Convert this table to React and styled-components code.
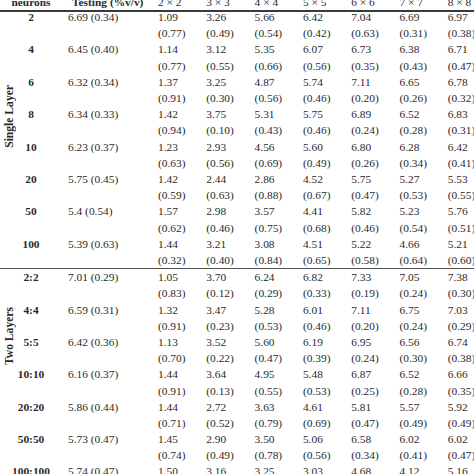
import styled, { createGlobalStyle } from "styled-components";

const GlobalStyle = createGlobalStyle`
    html, body {
        margin: 0;
        padding: 0;
        background: #ffffff;
        overflow: hidden;
    }
`

const sizes = ['2 × 2', '3 × 3', '4 × 4', '5 × 5', '6 × 6', '7 × 7', '8 × 8']

const single = [
    ['2', '6.69 (0.34)', [['1.09', '0.77'], ['3.26', '0.49'], ['5.66', '0.54'], ['6.42', '0.42'], ['7.04', '0.63'], ['6.69', '0.31'], ['6.97', '0.38']]],
    ['4', '6.45 (0.40)', [['1.14', '0.77'], ['3.12', '0.55'], ['5.35', '0.66'], ['6.07', '0.56'], ['6.73', '0.35'], ['6.38', '0.43'], ['6.71', '0.47']]],
    ['6', '6.32 (0.34)', [['1.37', '0.91'], ['3.25', '0.30'], ['4.87', '0.56'], ['5.74', '0.46'], ['7.11', '0.20'], ['6.65', '0.26'], ['6.78', '0.32']]],
    ['8', '6.34 (0.33)', [['1.42', '0.94'], ['3.75', '0.10'], ['5.31', '0.43'], ['5.75', '0.46'], ['6.89', '0.24'], ['6.52', '0.28'], ['6.83', '0.31']]],
    ['10', '6.23 (0.37)', [['1.23', '0.63'], ['2.93', '0.56'], ['4.56', '0.69'], ['5.60', '0.49'], ['6.80', '0.26'], ['6.28', '0.34'], ['6.42', '0.41']]],
    ['20', '5.75 (0.45)', [['1.42', '0.59'], ['2.44', '0.63'], ['2.86', '0.88'], ['4.52', '0.67'], ['5.75', '0.47'], ['5.27', '0.53'], ['5.53', '0.55']]],
    ['50', '5.4 (0.54)', [['1.57', '0.62'], ['2.98', '0.46'], ['3.57', '0.75'], ['4.41', '0.68'], ['5.82', '0.46'], ['5.23', '0.54'], ['5.76', '0.51']]],
    ['100', '5.39 (0.63)', [['1.44', '0.32'], ['3.21', '0.40'], ['3.08', '0.84'], ['4.51', '0.65'], ['5.22', '0.58'], ['4.66', '0.64'], ['5.21', '0.60']]],
]

const two = [
    ['2:2', '7.01 (0.29)', [['1.05', '0.83'], ['3.70', '0.12'], ['6.24', '0.29'], ['6.82', '0.33'], ['7.33', '0.19'], ['7.05', '0.24'], ['7.38', '0.30']]],
    ['4:4', '6.59 (0.31)', [['1.32', '0.91'], ['3.47', '0.23'], ['5.28', '0.53'], ['6.01', '0.46'], ['7.11', '0.20'], ['6.75', '0.24'], ['7.03', '0.29']]],
    ['5:5', '6.42 (0.36)', [['1.13', '0.70'], ['3.52', '0.22'], ['5.60', '0.47'], ['6.19', '0.39'], ['6.95', '0.24'], ['6.56', '0.30'], ['6.74', '0.38']]],
    ['10:10', '6.16 (0.37)', [['1.44', '0.91'], ['3.64', '0.13'], ['4.95', '0.55'], ['5.48', '0.53'], ['6.87', '0.25'], ['6.52', '0.28'], ['6.66', '0.35']]],
    ['20:20', '5.86 (0.44)', [['1.44', '0.71'], ['2.72', '0.52'], ['3.63', '0.79'], ['4.61', '0.69'], ['5.81', '0.47'], ['5.57', '0.49'], ['5.92', '0.49']]],
    ['50:50', '5.73 (0.47)', [['1.45', '0.74'], ['2.90', '0.49'], ['3.50', '0.78'], ['5.06', '0.56'], ['6.58', '0.34'], ['6.02', '0.41'], ['6.02', '0.47']]],
    ['100:100', '5.74 (0.47)', [['1.50', '0.81'], ['3.16', '0.45'], ['3.25', '0.80'], ['3.03', '0.62'], ['4.68', '0.51'], ['4.12', '0.55'], ['5.16', '0.52']]],
]

const App = () => {
    return (
        <Page>
            <GlobalStyle />
            <HeaderRow>
                <Neurons>neurons</Neurons>
                <Testing $bold>Testing (%v/v)</Testing>
                {sizes.map(s => <Cell key={s}>{s}</Cell>)}
            </HeaderRow>
            <Section $first>
                <SideLabel $top={76}>Single Layer</SideLabel>
                {single.map(([n, t, vals]) => (
                    <DataRow key={n} n={n} t={t} vals={vals} />
                ))}
            </Section>
            <Section>
                <SideLabel $top={38}>Two Layers</SideLabel>
                {two.map(([n, t, vals]) => (
                    <DataRow key={n} n={n} t={t} vals={vals} />
                ))}
            </Section>
        </Page>
    )
}

const DataRow = ({ n, t, vals }) => (
    <Row>
        <Neurons>{n}</Neurons>
        <Testing>{t}</Testing>
        {vals.map(([v, sd], i) => (
            <Cell key={i}>
                <div>{v}</div>
                <div>({sd})</div>
            </Cell>
        ))}
    </Row>
)

const Page = styled.div`
    width: 474px;
    height: 474px;
    overflow: hidden;
    font-family: 'Liberation Serif', 'Times New Roman', serif;
    font-size: 11.4px;
    line-height: 16.2px;
    color: #2a2a2a;
`

const Columns = styled.div`
    display: grid;
    grid-template-columns: 42px 16px 90px repeat(7, 48.3px);
    padding-left: 10px;
    align-items: start;
`

const HeaderRow = styled(Columns)`
    margin-top: -5px;
    height: 15px;
    line-height: 14px;
    border-bottom: 2px solid #3a3a3a;
    overflow: hidden;
`

const Row = styled(Columns)`
    height: 32.4px;
`

const Neurons = styled.div`
    grid-column: 1;
    text-align: center;
    font-weight: bold;
    white-space: nowrap;
`

const Testing = styled.div`
    grid-column: 3;
    white-space: nowrap;
    font-weight: ${props => props.$bold ? 'bold' : 'normal'};
    padding-left: ${props => props.$bold ? '4px' : '0px'};
`

const Cell = styled.div`
    white-space: nowrap;
`

const Section = styled.div`
    position: relative;
    margin-top: ${props => props.$first ? '-3px' : '0px'};
    border-top: ${props => props.$first ? 'none' : '1.5px solid #555'};
`

const SideLabel = styled.div`
    position: absolute;
    left: 3px;
    top: ${props => props.$top}px;
    writing-mode: vertical-rl;
    transform: rotate(180deg);
    font-weight: bold;
    font-size: 11.6px;
    line-height: 14px;
    white-space: nowrap;
`

export default App;
